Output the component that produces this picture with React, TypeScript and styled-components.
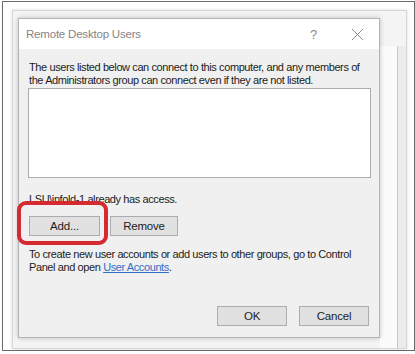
import React from "react";
import styled, { createGlobalStyle } from "styled-components";

const GlobalStyle = createGlobalStyle`
  html, body {
    margin: 0;
    background: #ffffff;
  }
  * {
    box-sizing: border-box;
  }
`;

const App: React.FC = () => {
  return (
    <>
      <GlobalStyle />
      <Frame>
        <BackWindow>
          <Dialog>
            {/* 제목 표시줄 */}
            <TitleBar>
              <Title>Remote Desktop Users</Title>
              <HelpButton>?</HelpButton>
              <CloseButton>
                <svg width="13" height="13" viewBox="0 0 13 13">
                  <path
                    d="M1 1 L12 12 M12 1 L1 12"
                    stroke="#8a8a8a"
                    strokeWidth="1"
                    fill="none"
                  />
                </svg>
              </CloseButton>
            </TitleBar>

            {/* 본문 */}
            <Body>
              <Text>
                The users listed below can connect to this computer, and any
                members of
                <br />
                the Administrators group can connect even if they are not
                listed.
              </Text>
              <UserList />
              <AccessText>LSU\infold-1 already has access.</AccessText>
              <ButtonRow>
                <Highlighted>
                  <Button $width={71}>Add...</Button>
                  <RedMark />
                </Highlighted>
                <Button $width={68}>Remove</Button>
              </ButtonRow>
              <InfoText>
                To create new user accounts or add users to other groups, go
                to Control
                <br />
                Panel and open <Link>User Accounts</Link>.
              </InfoText>
              <FooterRow>
                <Button $width={70}>OK</Button>
                <Button $width={70}>Cancel</Button>
              </FooterRow>
            </Body>
          </Dialog>
        </BackWindow>
      </Frame>
    </>
  );
};

const Frame = styled.div`
  width: 413px;
  height: 350px;
  margin: 1px 0 0 2px;
  border: 1px solid #6a6a6a;
  padding: 8px 0 0 9px;
  font-family: "Liberation Sans", Arial, sans-serif;
`;

const BackWindow = styled.div`
  width: 395px;
  height: 339px;
  border: 1px solid #d6d6d6;
  background: linear-gradient(
      to right,
      transparent 0,
      transparent 367px,
      #fbfbfb 367px,
      #fbfbfb 384px,
      #c8c8c8 384px,
      #c8c8c8 385px,
      #ececec 385px
    )
    0 35px / 100% 100% no-repeat,
    #f4f4f4;
  box-shadow: 0 0 3px rgba(0, 0, 0, 0.15);
  padding: 7px 0 0 5px;
`;

const Dialog = styled.div`
  width: 362px;
  height: 320px;
  display: flex;
  flex-direction: column;
  border: 1px solid #b4b4b4;
  background: #f0f0f0;
  box-shadow: 0 0 5px rgba(0, 0, 0, 0.22);
`;

const TitleBar = styled.div`
  display: flex;
  align-items: center;
  height: 30px;
  background: #ffffff;
  padding: 0 0 0 7px;
`;

const Title = styled.div`
  flex: 1 1 auto;
  font-size: 11.5px;
  letter-spacing: -0.2px;
  color: #858585;
`;

const HelpButton = styled.div`
  width: 20px;
  font-size: 13px;
  color: #8a8a8a;
  margin-right: 21px;
`;

const CloseButton = styled.div`
  display: flex;
  align-items: center;
  margin-right: 15px;
`;

const Body = styled.div`
  flex: 1 1 auto;
  display: flex;
  flex-direction: column;
  padding: 12px 8px 11px 9px;
`;

const Text = styled.p`
  margin: 0;
  font-size: 11px;
  letter-spacing: -0.4px;
  line-height: 13px;
  color: #1c1c1c;
  padding-left: 1px;
  white-space: nowrap;
`;

const UserList = styled.div`
  height: 90px;
  margin-top: 1px;
  background: #ffffff;
  border: 1px solid #acacac;
`;

const AccessText = styled(Text)`
  margin-top: 15px;
`;

const ButtonRow = styled.div`
  display: flex;
  gap: 10px;
  margin-top: 10px;
  padding-left: 1px;
`;

const Highlighted = styled.div`
  position: relative;
`;

const RedMark = styled.div`
  position: absolute;
  left: -12px;
  top: -15px;
  width: 91px;
  height: 44px;
  border: 4px solid #d42a30;
  border-radius: 9px;
  pointer-events: none;
`;

const Button = styled.div<{ $width: number }>`
  display: flex;
  align-items: center;
  justify-content: center;
  width: ${(p) => p.$width}px;
  height: 20px;
  background: #e1e1e1;
  border: 1px solid #adadad;
  font-size: 11.5px;
  letter-spacing: -0.2px;
  color: #1c1c1c;
`;

const InfoText = styled(Text)`
  margin-top: 12px;
`;

const Link = styled.span`
  color: #2f6fc7;
  text-decoration: underline;
`;

const FooterRow = styled.div`
  display: flex;
  justify-content: flex-end;
  gap: 12px;
  margin-top: auto;
  padding-right: 2px;
`;

export default App;
